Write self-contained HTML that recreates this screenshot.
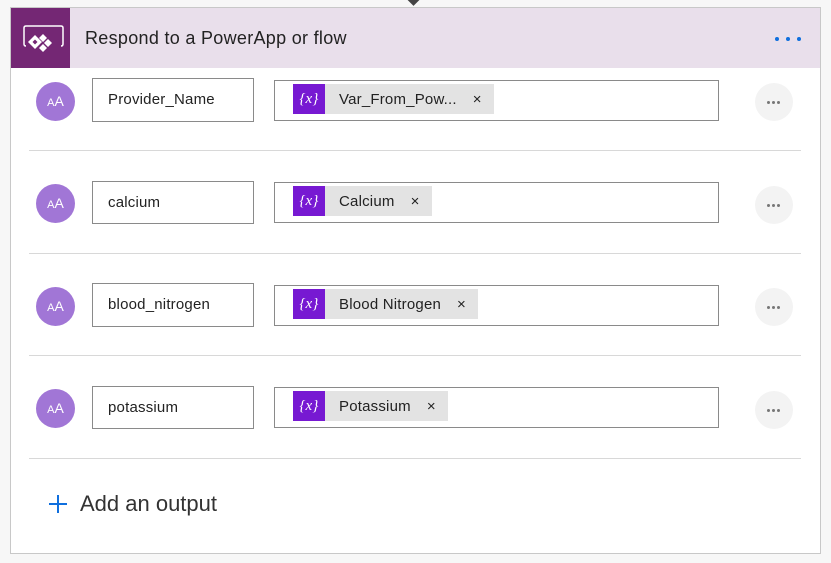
<!DOCTYPE html><html><head><style>
body{margin:0;width:831px;height:563px;background:#f7f7f7;position:relative;overflow:hidden;font-family:"Liberation Sans","Segoe UI",sans-serif}
.card{position:absolute;left:10px;top:7px;width:809px;height:545px;background:#fff;border:1px solid #c8c8c8}
.av{position:absolute;left:36px;width:39px;height:39px;border-radius:50%;background:#a176d6;color:#fff;font-size:14px;text-align:center;line-height:39px}
.nm{position:absolute;left:92px;width:162px;height:42px;border:1px solid #8a8a8a;box-sizing:border-box;font-size:15px;color:#222;padding:12px 0 0 15px;letter-spacing:0.2px}
.val{position:absolute;left:274px;width:445px;height:41px;border:1px solid #8a8a8a;box-sizing:border-box}
.chip{position:absolute;left:18px;top:3px;height:30px;background:#e3e3e3;font-size:15px;color:#222;line-height:32px;padding-left:46px;padding-right:12px;letter-spacing:0.2px}
.chip b{position:absolute;left:0;top:0;width:32px;height:30px;line-height:30px;background:#7719d2;color:#fff;font-weight:normal;font-family:"Liberation Serif",serif;font-style:italic;text-align:center;font-size:15px}
.chip s{text-decoration:none;margin-left:16px;font-size:15px}
.more{position:absolute;left:755px;width:38px;height:38px;border-radius:50%;background:#f3f3f3}
.more i{position:absolute;top:18px;width:3px;height:3px;border-radius:50%;background:#777}
.sep{position:absolute;left:29px;width:772px;height:1px;background:#d8d8d8}
</style></head><body>
<div style="position:absolute;left:409px;top:-5px;width:9px;height:9px;background:#444;transform:rotate(45deg)"></div>
<div class="card"></div>
<div style="position:absolute;left:11px;top:8px;width:809px;height:60px;background:#e9dfeb"></div>
<div style="position:absolute;left:11px;top:8px;width:59px;height:60px;background:#742774">
<svg width="59" height="60" viewBox="0 0 59 60"><path d="M13 33 V20 Q13 18 15 18 H50 Q52 18 52 20 V33 M13 33 V36 Q13 38 15 38 M52 33 V36 Q52 38 50 38" fill="none" stroke="#fff" stroke-width="1.5"/><g fill="#742774"><rect x="16" y="25" width="28" height="20"/></g><g fill="#fff"><path d="M24 27 L31 34 L24 41 L17 34Z"/><path d="M32 26 L36 30 L32 34 L28 30Z"/><path d="M37 31 L41 35 L37 39 L33 35Z"/><path d="M32 36 L36 40 L32 44 L28 40Z"/></g><path d="M24 31.5 L26.5 34 L24 36.5 L21.5 34Z" fill="#742774"/></svg></div>
<div style="position:absolute;left:85px;top:28px;font-size:18px;color:#222;letter-spacing:0.3px">Respond to a PowerApp or flow</div>
<div style="position:absolute;left:775px;top:37px;width:4px;height:4px;border-radius:50%;background:#0f6fde"></div>
<div style="position:absolute;left:786px;top:37px;width:4px;height:4px;border-radius:50%;background:#0f6fde"></div>
<div style="position:absolute;left:797px;top:37px;width:4px;height:4px;border-radius:50%;background:#0f6fde"></div>

<div class="av" style="top:82px"><span style="font-size:11px">A</span>A</div>
<div class="nm" style="top:78px;height:44px">Provider_Name</div>
<div class="val" style="top:80px"><div class="chip"><b>{x}</b>Var_From_Pow...<s>×</s></div></div>
<div class="more" style="top:83px"><i style="left:12px"></i><i style="left:17px"></i><i style="left:22px"></i></div>
<div class="sep" style="top:150px"></div>

<div class="av" style="top:184px"><span style="font-size:11px">A</span>A</div>
<div class="nm" style="top:181px;height:43px">calcium</div>
<div class="val" style="top:182px"><div class="chip"><b>{x}</b>Calcium<s>×</s></div></div>
<div class="more" style="top:186px"><i style="left:12px"></i><i style="left:17px"></i><i style="left:22px"></i></div>
<div class="sep" style="top:253px"></div>

<div class="av" style="top:287px"><span style="font-size:11px">A</span>A</div>
<div class="nm" style="top:283px;height:44px">blood_nitrogen</div>
<div class="val" style="top:285px"><div class="chip"><b>{x}</b>Blood Nitrogen<s>×</s></div></div>
<div class="more" style="top:288px"><i style="left:12px"></i><i style="left:17px"></i><i style="left:22px"></i></div>
<div class="sep" style="top:355px"></div>

<div class="av" style="top:389px"><span style="font-size:11px">A</span>A</div>
<div class="nm" style="top:386px;height:43px">potassium</div>
<div class="val" style="top:387px"><div class="chip"><b>{x}</b>Potassium<s>×</s></div></div>
<div class="more" style="top:391px"><i style="left:12px"></i><i style="left:17px"></i><i style="left:22px"></i></div>
<div class="sep" style="top:458px"></div>

<div style="position:absolute;left:49px;top:503px;width:18px;height:2px;background:#0f6fde"></div>
<div style="position:absolute;left:57px;top:495px;width:2px;height:18px;background:#0f6fde"></div>
<div style="position:absolute;left:80px;top:491px;font-size:22px;color:#333">Add an output</div>
</body></html>
